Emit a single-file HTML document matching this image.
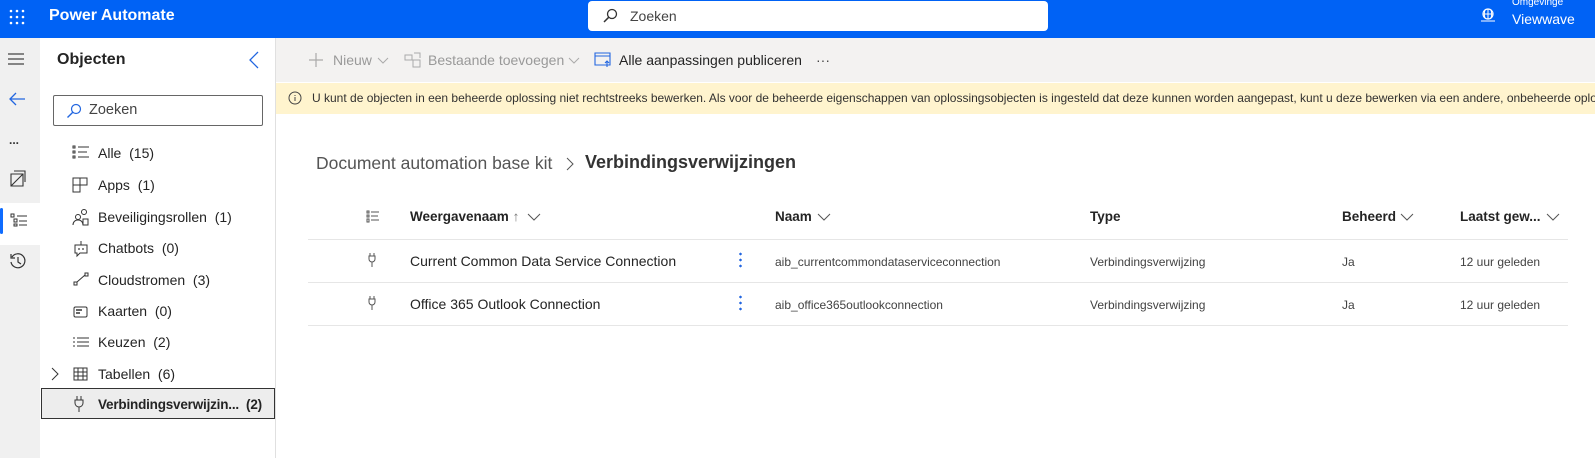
<!DOCTYPE html>
<html><head><meta charset="utf-8"><style>
*{box-sizing:border-box;margin:0;padding:0}
body{width:1595px;height:458px;overflow:hidden;font-family:"Liberation Sans",sans-serif;color:#242424;background:#fff;position:relative;font-size:14px}
.a{position:absolute;white-space:nowrap}
.hdr{left:0;top:0;width:1595px;height:38px;background:#0062f5}
.rail{left:0;top:38px;width:40px;height:420px;background:#f0f0f0}
.panel{left:40px;top:38px;width:236px;height:420px;background:#fff;border-right:1px solid #e0e0e0}
.tb{left:276px;top:38px;width:1319px;height:44px;background:#f3f2f1}
.warn{left:276px;top:83px;width:1319px;height:31px;background:#fff4ce;font-size:12px;line-height:31px;padding-left:36px;color:#323130;overflow:hidden}
.item{left:98px;font-size:14px;color:#242424}
.line{height:1px;background:#e6e6e6;left:308px;width:1260px}
.cell{font-size:13px;color:#424242}
.th{font-size:13.5px;font-weight:bold;color:#242424;top:209px}
svg{position:absolute}
</style></head><body>
<div class="a hdr"></div>
<svg style="left:9px;top:9px" width="16" height="16"><g fill="#fff"><circle cx="2" cy="2" r="1.3"/><circle cx="8" cy="2" r="1.3"/><circle cx="14" cy="2" r="1.3"/><circle cx="2" cy="8" r="1.3"/><circle cx="8" cy="8" r="1.3"/><circle cx="14" cy="8" r="1.3"/><circle cx="2" cy="14" r="1.3"/><circle cx="8" cy="14" r="1.3"/><circle cx="14" cy="14" r="1.3"/></g></svg>
<div class="a" style="left:49px;top:7px;color:#fff;font-size:16px;font-weight:bold">Power Automate</div>
<div class="a" style="left:588px;top:1px;width:460px;height:30px;background:#fff;border-radius:4px"></div>
<svg style="left:602px;top:8px" width="16" height="16"><circle cx="10" cy="6" r="4.5" fill="none" stroke="#333" stroke-width="1.3"/><path d="M6.8 9.2L2 14" stroke="#333" stroke-width="1.5"/></svg>
<div class="a" style="left:630px;top:8px;font-size:14px;color:#444">Zoeken</div>
<svg style="left:1480px;top:8px" width="16" height="14"><circle cx="8" cy="6" r="5" fill="none" stroke="#fff" stroke-width="1.2"/><path d="M3 6h10M8 1v10M5 2c-1 3-1 5 0 8M11 2c1 3 1 5 0 8M1 13h14" stroke="#fff" stroke-width="1"/></svg>
<div class="a" style="left:1512px;top:-3px;color:#fff;font-size:10px">Omgevinge</div>
<div class="a" style="left:1512px;top:11px;color:#fff;font-size:14px">Viewwave</div>

<div class="a rail"></div>
<svg style="left:8px;top:53px" width="18" height="12"><path d="M0 1h16M0 6h16M0 11h16" stroke="#444" stroke-width="1.2"/></svg>
<svg style="left:8px;top:92px" width="18" height="14"><path d="M17 7H2M8 1L2 7l6 6" fill="none" stroke="#2266e0" stroke-width="1.3"/></svg>
<div class="a" style="left:9px;top:133px;font-size:12px;font-weight:bold;color:#333">...</div>
<svg style="left:10px;top:170px" width="16" height="20"><path d="M1 4h12v12H1zM4 1h11v11M1 16l12-12" fill="none" stroke="#333" stroke-width="1.1"/></svg>
<div class="a" style="left:0;top:203px;width:40px;height:42px;background:#fff"></div>
<div class="a" style="left:0;top:208px;width:3px;height:26px;background:#0f6cff;border-radius:2px"></div>
<svg style="left:10px;top:213px" width="18" height="14"><path d="M1 1h3v3H1zM4 6h3v3H4zM4 11h3v2H4zM7 3h10M9 8h8M9 12h8" fill="none" stroke="#333" stroke-width="1"/></svg>
<svg style="left:9px;top:252px" width="18" height="18"><path d="M3 5a7 7 0 1 1-1 5M2 2v4h4M9 5v5l3 2" fill="none" stroke="#333" stroke-width="1.2"/></svg>

<div class="a panel"></div>
<div class="a" style="left:57px;top:51px;font-size:16px;font-weight:bold">Objecten</div>
<svg style="left:248px;top:51px" width="12" height="18"><path d="M10 1L2 9l8 8" fill="none" stroke="#2266e0" stroke-width="1.3"/></svg>
<div class="a" style="left:53px;top:95px;width:210px;height:31px;border:1px solid #666;border-radius:2px"></div>
<svg style="left:66px;top:103px" width="16" height="16"><circle cx="10" cy="6" r="4.5" fill="none" stroke="#2266e0" stroke-width="1.2"/><path d="M6.8 9.2L1.5 14.5" stroke="#2266e0" stroke-width="1.4"/></svg>
<div class="a" style="left:89px;top:102px;font-size:14.5px;color:#444">Zoeken</div>

<svg style="left:72px;top:145px" width="18" height="18"><path d="M1 1h2v2H1zM1 6h2v2H1zM1 11h2v2H1zM6 2h11M6 7h9M6 12h11" fill="none" stroke="#333" stroke-width="1"/></svg>
<div class="a item" style="top:145px">Alle&nbsp; (15)</div>
<svg style="left:72px;top:177px" width="18" height="18"><path d="M1 1h7v7H1zM8 1h7v7H8zM1 8h7v7H1z" fill="none" stroke="#333" stroke-width="1"/></svg>
<div class="a item" style="top:177px">Apps&nbsp; (1)</div>
<svg style="left:72px;top:209px" width="18" height="18"><circle cx="12" cy="3" r="2.5" fill="none" stroke="#333"/><circle cx="6" cy="8" r="2.5" fill="none" stroke="#333"/><path d="M1 16c0-3 2-5 5-5s5 2 5 5M11 10h5v6h-5z" fill="none" stroke="#333"/></svg>
<div class="a item" style="top:209px">Beveiligingsrollen&nbsp; (1)</div>
<svg style="left:73px;top:240px" width="16" height="18"><path d="M2 5h12v8H7l-3 3v-3H2zM8 1v4" fill="none" stroke="#333"/><circle cx="6" cy="9" r=".9" fill="#333"/><circle cx="10" cy="9" r=".9" fill="#333"/></svg>
<div class="a item" style="top:240px">Chatbots&nbsp; (0)</div>
<svg style="left:73px;top:272px" width="18" height="16"><path d="M1 10h3v3H1zM12 1h3v3h-3zM4 10l8-7" fill="none" stroke="#333"/></svg>
<div class="a item" style="top:272px">Cloudstromen&nbsp; (3)</div>
<svg style="left:73px;top:305px" width="16" height="14"><rect x="1" y="2" width="13" height="10" rx="1.5" fill="none" stroke="#333"/><path d="M3 5h6M3 8h4" stroke="#333" stroke-width="1.5"/></svg>
<div class="a item" style="top:303px">Kaarten&nbsp; (0)</div>
<svg style="left:73px;top:336px" width="18" height="14"><path d="M0 2h2M0 6h2M0 10h2M4 2h12M4 6h12M4 10h12" stroke="#333"/></svg>
<div class="a item" style="top:334px">Keuzen&nbsp; (2)</div>
<svg style="left:51px;top:367px" width="8" height="14"><path d="M1 1l6 6-6 6" fill="none" stroke="#333"/></svg>
<svg style="left:73px;top:367px" width="16" height="14"><path d="M1 1h13v12H1zM1 5h13M1 9h13M5 1v12M10 1v12" fill="none" stroke="#333"/></svg>
<div class="a item" style="top:366px">Tabellen&nbsp; (6)</div>
<div class="a" style="left:41px;top:388px;width:234px;height:31px;background:#ededed;border:1px solid #333"></div>
<svg style="left:74px;top:396px" width="10" height="16"><path d="M3 0v4M7 0v4M1 4h8v3a4 4 0 0 1-8 0zM5 11v5" fill="none" stroke="#333"/></svg>
<div class="a item" style="top:397px;font-weight:bold;font-size:13.5px;letter-spacing:-0.2px">Verbindingsverwijzin...&nbsp; (2)</div>

<div class="a tb"></div>
<svg style="left:308px;top:52px" width="16" height="16"><path d="M8 1v14M1 8h14" stroke="#aaa" stroke-width="1.2"/></svg>
<div class="a" style="left:333px;top:52px;color:#999">Nieuw</div>
<svg style="left:377px;top:57px" width="12" height="8"><path d="M1 1l5 5 5-5" fill="none" stroke="#aaa"/></svg>
<svg style="left:404px;top:52px" width="18" height="16"><path d="M1 3h7v5H1zM9 8h7v7H9zM10 1h6v5" fill="none" stroke="#aaa"/></svg>
<div class="a" style="left:428px;top:52px;color:#999">Bestaande toevoegen</div>
<svg style="left:568px;top:57px" width="12" height="8"><path d="M1 1l5 5 5-5" fill="none" stroke="#aaa"/></svg>
<svg style="left:594px;top:52px" width="18" height="16"><path d="M1 1h15v12H1zM1 4h15M13 15V9M11 11l2-2 2 2" fill="none" stroke="#2266e0" stroke-width="1.1"/></svg>
<div class="a" style="left:619px;top:52px;color:#242424">Alle aanpassingen publiceren</div>
<div class="a" style="left:816px;top:52px;color:#444;font-size:14px">···</div>

<div class="a warn">U kunt de objecten in een beheerde oplossing niet rechtstreeks bewerken. Als voor de beheerde eigenschappen van oplossingsobjecten is ingesteld dat deze kunnen worden aangepast, kunt u deze bewerken via een andere, onbeheerde oplossing.</div>
<svg style="left:288px;top:91px" width="14" height="14"><circle cx="7" cy="7" r="6" fill="none" stroke="#444"/><path d="M7 6v4M7 4v1" stroke="#444"/></svg>

<div class="a" style="left:316px;top:153px;font-size:17.5px;color:#555">Document automation base kit</div>
<svg style="left:566px;top:157px" width="8" height="14"><path d="M1 1l6 6-6 6" fill="none" stroke="#555"/></svg>
<div class="a" style="left:585px;top:152px;font-size:18px;font-weight:bold;color:#333">Verbindingsverwijzingen</div>

<svg style="left:366px;top:210px" width="14" height="14"><path d="M1 1h2v2H1zM1 5h2v2H1zM1 9h2v3H1zM5 2h8M5 6h7M5 10h8" fill="none" stroke="#555"/></svg>
<div class="a th" style="left:410px">Weergavenaam <span style="font-weight:normal;color:#777">↑</span></div>
<svg style="left:527px;top:213px" width="14" height="8"><path d="M1 1l6 6 6-6" fill="none" stroke="#555"/></svg>
<div class="a th" style="left:775px">Naam</div>
<svg style="left:817px;top:213px" width="14" height="8"><path d="M1 1l6 6 6-6" fill="none" stroke="#555"/></svg>
<div class="a th" style="left:1090px">Type</div>
<div class="a th" style="left:1342px">Beheerd</div>
<svg style="left:1400px;top:213px" width="14" height="8"><path d="M1 1l6 6 6-6" fill="none" stroke="#555"/></svg>
<div class="a th" style="left:1460px">Laatst gew...</div>
<svg style="left:1546px;top:213px" width="14" height="8"><path d="M1 1l6 6 6-6" fill="none" stroke="#555"/></svg>
<div class="a line" style="top:239px"></div>
<div class="a line" style="top:282px"></div>
<div class="a line" style="top:325px"></div>

<svg style="left:368px;top:253px" width="8" height="14"><path d="M2 0v3M6 0v3M1 3h6v3a3 3 0 0 1-6 0zM4 9v5" fill="none" stroke="#555"/></svg>
<div class="a" style="left:410px;top:253px;font-size:14px">Current Common Data Service Connection</div>
<div class="a" style="left:739px;top:251px;width:3px;height:18px;background:radial-gradient(circle,#2266e0 1.2px,transparent 1.4px) 0 0/3px 6px"></div>
<div class="a cell" style="left:775px;top:255px;font-size:12px">aib_currentcommondataserviceconnection</div>
<div class="a cell" style="left:1090px;top:255px;font-size:12px">Verbindingsverwijzing</div>
<div class="a cell" style="left:1342px;top:255px;font-size:12px">Ja</div>
<div class="a cell" style="left:1460px;top:255px;font-size:12px">12 uur geleden</div>

<svg style="left:368px;top:296px" width="8" height="14"><path d="M2 0v3M6 0v3M1 3h6v3a3 3 0 0 1-6 0zM4 9v5" fill="none" stroke="#555"/></svg>
<div class="a" style="left:410px;top:296px;font-size:14px">Office 365 Outlook Connection</div>
<div class="a" style="left:739px;top:294px;width:3px;height:18px;background:radial-gradient(circle,#2266e0 1.2px,transparent 1.4px) 0 0/3px 6px"></div>
<div class="a cell" style="left:775px;top:298px;font-size:12px">aib_office365outlookconnection</div>
<div class="a cell" style="left:1090px;top:298px;font-size:12px">Verbindingsverwijzing</div>
<div class="a cell" style="left:1342px;top:298px;font-size:12px">Ja</div>
<div class="a cell" style="left:1460px;top:298px;font-size:12px">12 uur geleden</div>
</body></html>
